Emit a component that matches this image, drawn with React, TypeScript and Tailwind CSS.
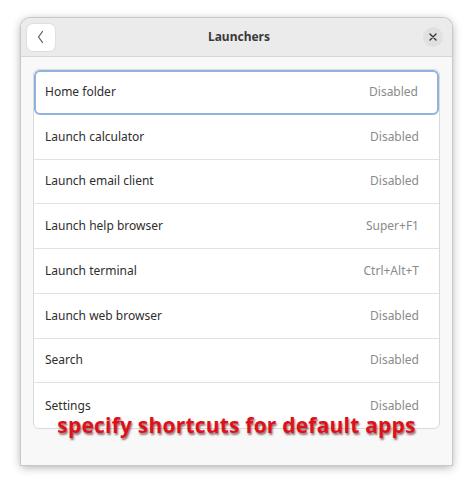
import type { ReactElement } from "react";

type Shortcut = {
  readonly label: string;
  readonly value: string;
};

const shortcuts: readonly Shortcut[] = [
  { label: "Home folder", value: "Disabled" },
  { label: "Launch calculator", value: "Disabled" },
  { label: "Launch email client", value: "Disabled" },
  { label: "Launch help browser", value: "Super+F1" },
  { label: "Launch terminal", value: "Ctrl+Alt+T" },
  { label: "Launch web browser", value: "Disabled" },
  { label: "Search", value: "Disabled" },
  { label: "Settings", value: "Disabled" },
];

export default function App(): ReactElement {
  return (
    <div
      className="h-[488px] w-[474px] bg-white pl-[21px] pt-[18px]"
      style={{ fontFamily: '"Noto Sans", "Open Sans", sans-serif' }}
    >
      <div className="relative flex h-[447px] w-[431px] flex-col overflow-hidden rounded-t-[9px] bg-[#f8f8f8] shadow-[0_2px_10px_rgba(0,0,0,0.35)] ring-1 ring-[#c8c8c8]">
        <HeaderBar />
        <div className="px-3 pt-3">
          <ul className="overflow-hidden rounded-[6px] border border-[#dadada] bg-white">
            {shortcuts.map((item, index) => (
              <ShortcutRow key={item.label} item={item} focused={index === 0} last={index === shortcuts.length - 1} />
            ))}
          </ul>
        </div>
        <p
          className="absolute left-0 right-0 top-[392px] text-center text-[21px] font-bold tracking-[0.2px] text-[#de111b] [text-shadow:1px_2px_2px_rgba(60,0,0,0.55)]"
          style={{ fontFamily: '"Open Sans", "Noto Sans", sans-serif' }}
        >
          specify shortcuts for default apps
        </p>
      </div>
    </div>
  );
}

function HeaderBar(): ReactElement {
  return (
    <header className="flex h-[39px] shrink-0 items-center justify-between border-b border-[#d6d6d6] bg-[#ebebeb] pl-[6px] pr-[9px]">
      <button
        type="button"
        className="flex h-[27px] w-[28px] items-center justify-center rounded-[6px] bg-white shadow-[0_0_0_1px_rgba(0,0,0,0.05)]"
        aria-label="Back"
      >
        <svg width="10" height="14" viewBox="0 0 10 14" fill="none">
          <path d="M6.5 1.5 L2.5 7 L6.5 12.5" stroke="#555" strokeWidth="1.2" strokeLinecap="round" strokeLinejoin="round" />
        </svg>
      </button>
      <h1 className="text-[12px] font-bold text-[#3a3a3a]">Launchers</h1>
      <button
        type="button"
        className="flex h-[20px] w-[20px] items-center justify-center rounded-full bg-[#e0e0e0]"
        aria-label="Close"
      >
        <svg width="8" height="8" viewBox="0 0 8 8">
          <path d="M1 1 L7 7 M7 1 L1 7" stroke="#333" strokeWidth="1.4" strokeLinecap="round" />
        </svg>
      </button>
    </header>
  );
}

type ShortcutRowProps = {
  readonly item: Shortcut;
  readonly focused: boolean;
  readonly last: boolean;
};

function ShortcutRow({ item, focused, last }: ShortcutRowProps): ReactElement {
  return (
    <li
      className={
        focused
          ? "flex h-[44.75px] items-center justify-between rounded-[6px] border-2 border-[#8fb3dc] pl-[9px] pr-[19px] text-[12px]"
          : last
            ? "flex h-[44.75px] items-center justify-between pl-[11px] pr-5 text-[12px]"
            : "flex h-[44.75px] items-center justify-between border-b border-[#e2e2e2] pl-[11px] pr-5 text-[12px]"
      }
    >
      <span className="text-[#2e2e2e]">{item.label}</span>
      <span className="text-[#8a8a8a]">{item.value}</span>
    </li>
  );
}
